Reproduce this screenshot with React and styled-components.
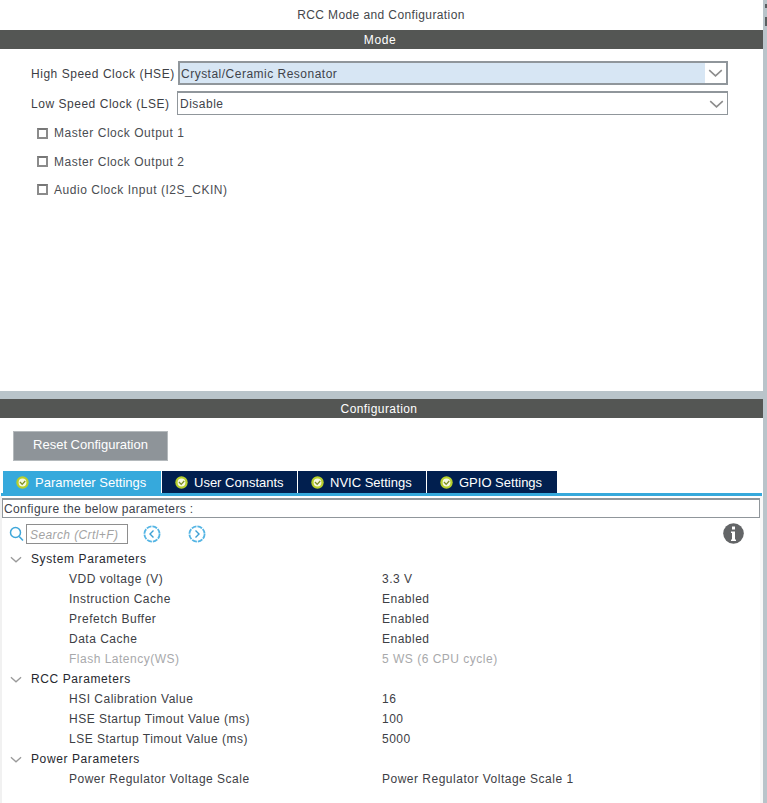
import React from "react";
import styled, { createGlobalStyle } from "styled-components";

const Global = createGlobalStyle`
  html, body { margin: 0; padding: 0; background: #fff; }
  * { box-sizing: border-box; }
`;

const Page = styled.div`
  width: 767px;
  height: 803px;
  overflow: hidden;
  display: flex;
  background: #fff;
  font-family: "Liberation Sans", Arial, sans-serif;
  font-size: 12px;
  color: #3d4045;
`;

const Content = styled.div`
  width: 763px;
  display: flex;
  flex-direction: column;
`;

const ScrollStrip = styled.div`
  width: 4px;
  background: #b9c4ca;
  display: flex;
  flex-direction: column;
  align-items: flex-end;
  padding-top: 4px;
`;

const ScrollMark = styled.span`
  width: 2px;
  height: ${(p) => p.$h}px;
  margin-bottom: ${(p) => p.$mb}px;
  background: #5a5f61;
`;

const ModePanel = styled.section`
  height: 391px;
  display: flex;
  flex-direction: column;
`;

const Title = styled.div`
  height: 30px;
  line-height: 30px;
  text-align: center;
  letter-spacing: 0.39px;
  color: #44474b;
  padding-right: 1px;
`;

const Bar = styled.div`
  height: 19px;
  line-height: 20px;
  background: #545654;
  color: #fff;
  text-align: center;
  letter-spacing: ${(p) => p.$ls}px;
  padding-right: ${(p) => p.$pr}px;
`;

const ModeBody = styled.div`
  display: flex;
  flex-direction: column;
  gap: 6px;
  padding: 12px 35px 0 31px;
`;

const SelectRow = styled.div`
  display: flex;
  align-items: center;
  height: 24px;
`;

const SelectLabel = styled.span`
  width: ${(p) => p.$w}px;
  flex: none;
  padding-top: 1px;
  letter-spacing: 0.53px;
  white-space: nowrap;
`;

const Select = styled.div`
  flex: 1;
  height: 24px;
  display: flex;
  align-items: center;
  border: ${(p) => (p.$focus ? "2px" : "1px")} solid #90969b;
  ${(p) => (p.$focus ? "" : "border-top-width: 2px;")}
  background: #fff;
`;

const SelectValue = styled.div`
  flex: 1;
  height: 100%;
  line-height: ${(p) => (p.$focus ? "22px" : "23px")};
  padding-left: ${(p) => (p.$focus ? "1px" : "2px")};
  background: ${(p) => (p.$focus ? "#d7e6f4" : "#fff")};
  letter-spacing: 0.49px;
  color: #40434a;
`;

const SelectArrow = styled.div`
  width: 21px;
  height: 100%;
  flex: none;
  display: flex;
  align-items: center;
  justify-content: center;
`;

const CheckList = styled.div`
  margin-top: -2px;
  display: flex;
  flex-direction: column;
`;

const CheckRow = styled.label`
  display: flex;
  align-items: center;
  height: 28.4px;
  padding-left: 6px;
  letter-spacing: 0.53px;
  color: #4a4d52;
`;

const Box = styled.span`
  width: 11px;
  height: 11px;
  border: 2px solid #8b8b8b;
  border-top-color: #777;
  margin-right: 6px;
  background: #fff;
  flex: none;
`;

const Splitter = styled.div`
  height: 8px;
  background: #b9c4ca;
`;

const ConfigPanel = styled.section`
  flex: 1;
  display: flex;
  flex-direction: column;
  background: #fff;
`;

const ResetButton = styled.button`
  align-self: flex-start;
  margin: 13px 0 10px 13px;
  width: 155px;
  height: 30px;
  border: 1px solid #b4b9bc;
  background: #8e9499;
  color: #fff;
  font: 13px "Liberation Sans", Arial, sans-serif;
  line-height: 26px;
  padding: 0 0 2px;
`;

const TabStrip = styled.div`
  display: flex;
  gap: 1px;
  padding-left: 3px;
  height: 22px;
  background: #fff;
`;

const Tab = styled.div`
  width: ${(p) => p.$w}px;
  display: flex;
  align-items: center;
  padding-left: ${(p) => p.$pad}px;
  gap: 6px;
  background: ${(p) => (p.$active ? "#36a9dc" : "#011f4f")};
  color: #fff;
  font: 13px "Liberation Sans", Arial, sans-serif;
  white-space: nowrap;
`;

const TabRule = styled.div`
  height: 3px;
  margin: 0 1px;
  background: #36a9dc;
`;

const Lower = styled.div`
  flex: 1;
  display: flex;
  flex-direction: column;
  padding-top: 2px;
  background: linear-gradient(to right, #f1f1f1 2px, #fff 2px, #fff 760px, #f8f8f8 760px);
`;

const Hint = styled.div`
  margin-left: 2px;
  width: 758px;
  height: 20px;
  line-height: 18px;
  border: 1px solid #90969b;
  border-top-width: 2px;
  padding-left: 1px;
  letter-spacing: 0.38px;
  color: #3d3f4c;
  background: #fff;
`;

const SearchBar = styled.div`
  display: flex;
  align-items: center;
  height: 21px;
  margin-top: 5px;
  padding-left: 9px;
`;

const SearchField = styled.div`
  width: 102px;
  height: 20px;
  line-height: 20px;
  margin-left: 2px;
  border: 1px solid #8e8e8e;
  padding-left: 3px;
  font-style: italic;
  color: #a3a3a3;
  letter-spacing: 0.4px;
  white-space: nowrap;
`;

const Nav = styled.span`
  display: flex;
  margin-left: ${(p) => p.$gap}px;
`;

const InfoSlot = styled.span`
  display: flex;
  margin-left: auto;
  margin-right: 19px;
`;

const Tree = styled.div`
  margin-top: 5px;
  display: flex;
  flex-direction: column;
`;

const GroupRow = styled.div`
  height: 20px;
  display: flex;
  align-items: center;
  padding-left: 10px;
  gap: 9px;
  letter-spacing: 0.6px;
  color: #26282e;
`;

const ParamRow = styled.div`
  height: 20px;
  display: grid;
  grid-template-columns: 313px 1fr;
  align-items: center;
  padding-left: 69px;
  letter-spacing: 0.5px;
  color: ${(p) => (p.$off ? "#a8a9ab" : "#3d4045")};
  white-space: nowrap;
`;

const Chevron = ({ w = 13, h = 7, c = "#8c8c8c" }) => (
  <svg width={w} height={h} viewBox="0 0 13 7" fill="none">
    <path d="M1 1 L6.5 6 L12 1" stroke={c} strokeWidth="1.4" />
  </svg>
);

const Badge = () => (
  <svg width="13" height="13" viewBox="0 0 13 13">
    <circle cx="6.5" cy="6.5" r="6.2" fill="#b7cf2c" />
    <circle cx="6.5" cy="6.5" r="3.9" fill="#f6f8e2" />
    <path d="M4 6 L6.2 8.4 L9.2 5" stroke="#7d8f22" strokeWidth="1.3" fill="none" />
  </svg>
);

const SearchIcon = () => (
  <svg width="15" height="16" viewBox="0 0 15 16" fill="none">
    <circle cx="6.5" cy="6.5" r="5" stroke="#3fa7da" strokeWidth="1.5" />
    <path d="M10.2 10.5 L14 14.5" stroke="#3fa7da" strokeWidth="1.6" />
  </svg>
);

const RoundNav = ({ dir }) => (
  <svg width="18" height="18" viewBox="0 0 18 18" fill="none">
    <circle cx="9" cy="9" r="7.6" stroke="#55b5e4" strokeWidth="1.8" strokeDasharray="5 1" />
    <path
      d={dir === "left" ? "M10.5 5.5 L7 9 L10.5 12.5" : "M7.5 5.5 L11 9 L7.5 12.5"}
      stroke="#3c9fd4"
      strokeWidth="1.4"
    />
  </svg>
);

const InfoIcon = () => (
  <svg width="21" height="21" viewBox="0 0 21 21">
    <circle cx="10.5" cy="10.5" r="10.3" fill="#636567" />
    <rect x="9" y="3.5" width="3" height="3" fill="#fff" />
    <path d="M8 8.5 H12 V16.5 H13 V18 H8 V16.5 H9 V10 H8 Z" fill="#fff" />
  </svg>
);

const tabs = [
  { label: "Parameter Settings", w: 158, pad: 13, active: true },
  { label: "User Constants", w: 135, pad: 13 },
  { label: "NVIC Settings", w: 128, pad: 13 },
  { label: "GPIO Settings", w: 130, pad: 13 },
];

const tree = [
  {
    name: "System Parameters",
    rows: [
      ["VDD voltage (V)", "3.3 V"],
      ["Instruction Cache", "Enabled"],
      ["Prefetch Buffer", "Enabled"],
      ["Data Cache", "Enabled"],
      ["Flash Latency(WS)", "5 WS (6 CPU cycle)", true],
    ],
  },
  {
    name: "RCC Parameters",
    rows: [
      ["HSI Calibration Value", "16"],
      ["HSE Startup Timout Value (ms)", "100"],
      ["LSE Startup Timout Value (ms)", "5000"],
    ],
  },
  {
    name: "Power Parameters",
    rows: [["Power Regulator Voltage Scale", "Power Regulator Voltage Scale 1"]],
  },
];

export default function App() {
  return (
    <Page>
      <Global />
      <Content>
        <ModePanel>
          <Title>RCC Mode and Configuration</Title>
          <Bar $ls={0.6} $pr={3}>Mode</Bar>
          <ModeBody>
            <SelectRow>
              <SelectLabel $w={147}>High Speed Clock (HSE)</SelectLabel>
              <Select $focus>
                <SelectValue $focus>Crystal/Ceramic Resonator</SelectValue>
                <SelectArrow><Chevron w={15} h={8} /></SelectArrow>
              </Select>
            </SelectRow>
            <SelectRow>
              <SelectLabel $w={146}>Low Speed Clock (LSE)</SelectLabel>
              <Select>
                <SelectValue>Disable</SelectValue>
                <SelectArrow><Chevron w={15} h={8} /></SelectArrow>
              </Select>
            </SelectRow>
            <CheckList>
              <CheckRow><Box />Master Clock Output 1</CheckRow>
              <CheckRow><Box />Master Clock Output 2</CheckRow>
              <CheckRow><Box />Audio Clock Input (I2S_CKIN)</CheckRow>
            </CheckList>
          </ModeBody>
        </ModePanel>
        <Splitter />
        <ConfigPanel>
          <Bar $ls={0.42} $pr={5}>Configuration</Bar>
          <ResetButton>Reset Configuration</ResetButton>
          <TabStrip>
            {tabs.map((t) => (
              <Tab key={t.label} $w={t.w} $pad={t.pad} $active={t.active}>
                <Badge />
                {t.label}
              </Tab>
            ))}
          </TabStrip>
          <TabRule />
          <Lower>
            <Hint>Configure the below parameters :</Hint>
            <SearchBar>
              <SearchIcon />
              <SearchField>Search (Crtl+F)</SearchField>
              <Nav $gap={15}><RoundNav dir="left" /></Nav>
              <Nav $gap={27}><RoundNav dir="right" /></Nav>
              <InfoSlot><InfoIcon /></InfoSlot>
            </SearchBar>
            <Tree>
              {tree.map((g) => (
                <React.Fragment key={g.name}>
                  <GroupRow>
                    <Chevron w={12} h={7} c="#9a9a9a" />
                    {g.name}
                  </GroupRow>
                  {g.rows.map(([k, v, off]) => (
                    <ParamRow key={k} $off={off}>
                      <span>{k}</span>
                      <span>{v}</span>
                    </ParamRow>
                  ))}
                </React.Fragment>
              ))}
            </Tree>
          </Lower>
        </ConfigPanel>
      </Content>
      <ScrollStrip>
        <ScrollMark $h={4} $mb={9} />
        <ScrollMark $h={9} $mb={0} />
      </ScrollStrip>
    </Page>
  );
}
